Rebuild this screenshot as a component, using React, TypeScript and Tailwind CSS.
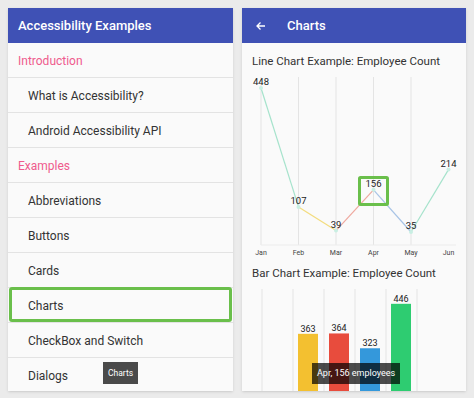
import React from 'react';

const font = { fontFamily: 'Roboto, "Noto Sans", Arial, sans-serif' };

type NavItem = { label: string; kind: 'section' | 'item'; active?: boolean };

const NAV_ITEMS: NavItem[] = [
  { label: 'Introduction', kind: 'section' },
  { label: 'What is Accessibility?', kind: 'item' },
  { label: 'Android Accessibility API', kind: 'item' },
  { label: 'Examples', kind: 'section' },
  { label: 'Abbreviations', kind: 'item' },
  { label: 'Buttons', kind: 'item' },
  { label: 'Cards', kind: 'item' },
  { label: 'Charts', kind: 'item', active: true },
  { label: 'CheckBox and Switch', kind: 'item' },
  { label: 'Dialogs', kind: 'item' },
];

const MONTHS = ['Jan', 'Feb', 'Mar', 'Apr', 'May', 'Jun'];
const LINE_VALUES = [448, 107, 39, 156, 35, 214];
const SEGMENT_COLORS = ['#a6e3cc', '#f3dc7e', '#efa89e', '#a8c4e6', '#a6e3cc'];

const BARS = [
  { value: 363, color: '#f3c030', x: 56 },
  { value: 364, color: '#e84c3d', x: 87 },
  { value: 323, color: '#3498db', x: 118 },
  { value: 446, color: '#2ecc71', x: 149 },
];

function LineChart() {
  const xs = MONTHS.map((_, i) => 19 + i * 37.5);
  const y = (v: number) => 172.2 - v * 0.3487;

  return (
    <svg width="224" height="186" className="block">
      {xs.slice(0, 5).map((x) => (
        <line key={x} x1={x} y1={5} x2={x} y2={173} stroke="#e4e4e4" strokeWidth="1" />
      ))}
      <line x1={19} y1={173} x2={214} y2={173} stroke="#ececec" strokeWidth="1" />

      {LINE_VALUES.slice(0, -1).map((v, i) => (
        <line
          key={i}
          x1={xs[i]}
          y1={y(v)}
          x2={xs[i + 1]}
          y2={y(LINE_VALUES[i + 1])}
          stroke={SEGMENT_COLORS[i]}
          strokeWidth="1.2"
        />
      ))}
      {LINE_VALUES.map((v, i) => (
        <circle key={i} cx={xs[i]} cy={y(v)} r="2" fill="#c9efe3" />
      ))}
      {LINE_VALUES.map((v, i) => (
        <text
          key={i}
          x={xs[i]}
          y={y(v) - 2.5}
          textAnchor="middle"
          fontSize="9.5"
          fill="#222"
          style={font}
        >
          {v}
        </text>
      ))}
      {MONTHS.map((m, i) => (
        <text key={m} x={xs[i]} y={183} textAnchor="middle" fontSize="7" fill="#444" style={font}>
          {m}
        </text>
      ))}

      {/* focus highlight around the April point */}
      <rect x={117.5} y={105.5} width={28} height={27} fill="none" stroke="#6abf4b" strokeWidth="3" rx="1" />
    </svg>
  );
}

function BarChart() {
  const top = (v: number) => 181 - v * 0.3614;
  return (
    <svg width="224" height="107" className="block">
      {[20, 51, 82, 113, 144, 175].map((x) => (
        <line key={x} x1={x} y1={5} x2={x} y2={107} stroke="#e4e4e4" strokeWidth="1" />
      ))}
      {BARS.map((b) => (
        <g key={b.value}>
          <rect x={b.x} y={top(b.value)} width={20} height={120} fill={b.color} />
          <text
            x={b.x + 10}
            y={top(b.value) - 2}
            textAnchor="middle"
            fontSize="9"
            fill="#222"
            style={font}
          >
            {b.value}
          </text>
        </g>
      ))}
    </svg>
  );
}

export default function App() {
  return (
    <div className="w-[474px] h-[398px] bg-[#ebebeb] flex gap-[9px] p-2 overflow-hidden" style={font}>
      {/* navigation list */}
      <section className="relative w-[225px] h-[383px] bg-[#fafafa] shadow-sm overflow-hidden">
        <div className="h-[35px] bg-[#3f51b5] flex items-center pl-[10px]">
          <h1 className="text-[13px] font-medium text-white">Accessibility Examples</h1>
        </div>
        {NAV_ITEMS.map((item) => (
          <div
            key={item.label}
            className="relative h-[35px] flex items-center pt-[2px] border-b border-[#e3e3e3]"
          >
            {item.kind === 'section' ? (
              <span className="pl-[10px] text-[12px] text-[#ef5b8d]">{item.label}</span>
            ) : (
              <span className="pl-[20px] text-[12px] text-[#333]">{item.label}</span>
            )}
            {item.active && (
              <div className="absolute inset-x-[1px] -top-[1px] bottom-0 border-[3px] border-[#6abf4b] rounded-[3px]" />
            )}
          </div>
        ))}
        <div className="absolute left-[95px] top-[354px] h-[22px] px-[5px] bg-[#4a4a4a] flex items-center">
          <span className="text-[8.5px] text-white">Charts</span>
        </div>
      </section>

      {/* charts screen */}
      <section className="relative w-[224px] h-[383px] bg-[#fafafa] shadow-sm overflow-hidden">
        <div className="h-[35px] bg-[#3f51b5] flex items-center">
          <svg width="12" height="12" viewBox="0 0 24 24" className="ml-[13px]" fill="none" stroke="white" strokeWidth="2.6">
            <path d="M20 12H5M11 5l-7 7 7 7" />
          </svg>
          <h2 className="ml-[20px] text-[13px] font-medium text-white">Charts</h2>
        </div>
        <div className="pt-[11px]">
          <div className="pl-[10px] h-4 flex items-center text-[11.5px] text-[#333]">
            Line Chart Example: Employee Count
          </div>
          <div className="mt-[2px]">
            <LineChart />
          </div>
          <div className="mt-2 pl-[10px] h-4 flex items-center text-[11.5px] text-[#333]">
            Bar Chart Example: Employee Count
          </div>
          <div className="mt-[2px]">
            <BarChart />
          </div>
        </div>
        <div className="absolute left-[70px] top-[355px] h-[21px] px-[5px] bg-black/70 flex items-center">
          <span className="text-[9px] text-white">Apr, 156 employees</span>
        </div>
      </section>
    </div>
  );
}
